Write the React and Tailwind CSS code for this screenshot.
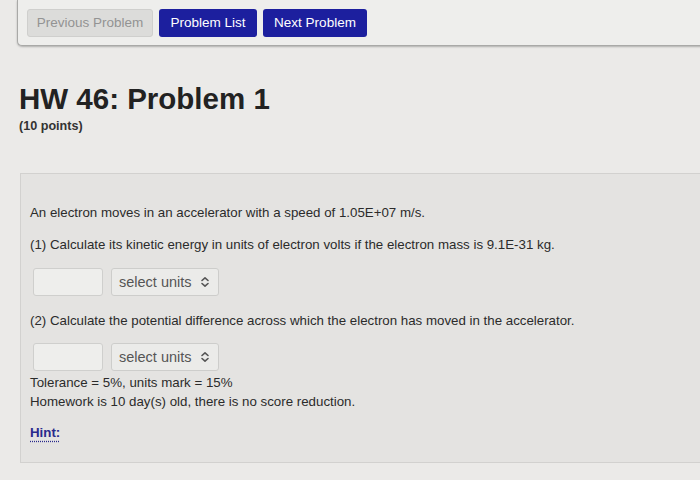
import React from 'react';

function UpDown() {
  return (
    <svg width="10" height="12" viewBox="0 0 10 12" fill="none" stroke="#555" strokeWidth="1.6" strokeLinecap="round" strokeLinejoin="round">
      <path d="M2 4.5 L5 1.8 L8 4.5" />
      <path d="M2 7.5 L5 10.2 L8 7.5" />
    </svg>
  );
}

function AnswerRow() {
  return (
    <div className="flex items-center gap-[8px] ml-[3px]">
      <div className="w-[70px] h-[28px] bg-[#eeeeec] border border-[#cfcfcd] rounded-[3px]"></div>
      <div className="h-[28px] w-[108px] px-[7px] flex items-center gap-[8px] bg-[#ebebe9] border border-[#cdcdcb] rounded-[3px] text-[14.5px] text-[#555]">
        <span>select units</span>
        <UpDown />
      </div>
    </div>
  );
}

export default function App() {
  return (
    <div className="w-[700px] h-[480px] overflow-hidden bg-[#ebeae8] text-[#2b2b2b] font-['Liberation_Sans',Arial,sans-serif]">
      {/* Nav bar */}
      <div className="ml-[17px] w-[700px] h-[46px] bg-[#eeeeec] border-l border-b border-[#a9a9a7] rounded-bl-[5px] shadow-[0_1px_2px_rgba(0,0,0,0.25)] pl-[9px] pt-[9px]">
        <div className="flex gap-[6px] text-[13.5px]">
          <div className="h-[28px] w-[126px] flex items-center justify-center bg-[#dcdcda] border border-[#cfcfcd] rounded-[3px] text-[#939393]">
            Previous Problem
          </div>
          <div className="h-[28px] w-[98px] flex items-center justify-center bg-[#1c1f9e] rounded-[3px] text-white">
            Problem List
          </div>
          <div className="h-[28px] w-[104px] flex items-center justify-center bg-[#1c1f9e] rounded-[3px] text-white">
            Next Problem
          </div>
        </div>
      </div>

      {/* Title */}
      <div className="ml-[19px] mt-[38px]">
        <h1 className="text-[29.5px] leading-[30px] font-bold text-[#222]">HW 46: Problem 1</h1>
        <div className="mt-[4px] text-[12.6px] leading-[16px] font-bold text-[#333]">(10 points)</div>
      </div>

      {/* Problem box */}
      <div className="ml-[20px] mt-[39px] w-[700px] bg-[#e4e3e1] border border-[#d2d1cf] pt-[29px] pb-[20px] pl-[9px] text-[13.3px] leading-[19px]">
        <p>An electron moves in an accelerator with a speed of 1.05E+07 m/s.</p>
        <p className="mt-[13px]">(1) Calculate its kinetic energy in units of electron volts if the electron mass is 9.1E-31 kg.</p>
        <div className="mt-[14px]">
          <AnswerRow />
        </div>
        <p className="mt-[15px]">(2) Calculate the potential difference across which the electron has moved in the accelerator.</p>
        <div className="mt-[13px]">
          <AnswerRow />
        </div>
        <p className="mt-[2px]">Tolerance = 5%, units mark = 15%</p>
        <p>Homework is 10 day(s) old, there is no score reduction.</p>
        <p className="mt-[12px]">
          <span className="font-bold text-[#2a2a8c] underline decoration-dotted decoration-[#2a2a8c] underline-offset-[4px]">Hint:</span>
        </p>
      </div>
    </div>
  );
}
